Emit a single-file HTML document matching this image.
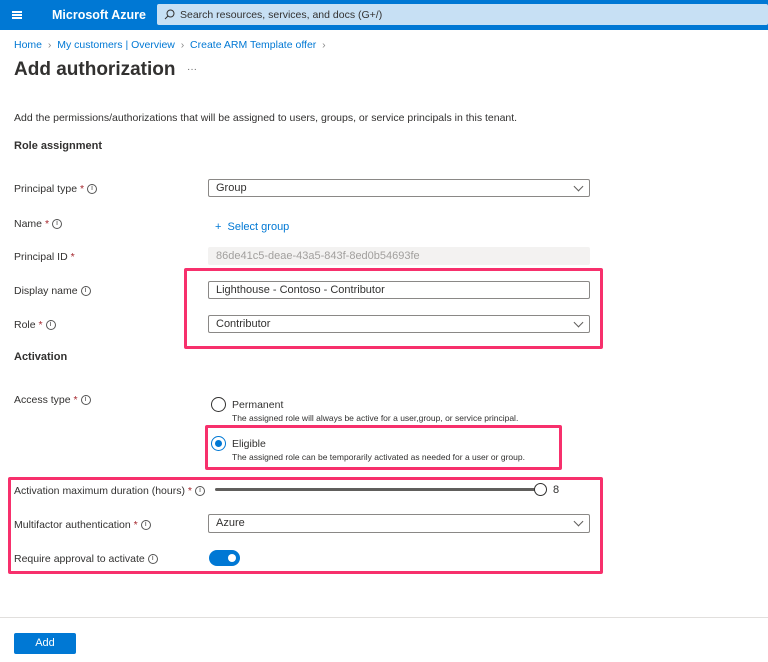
<!DOCTYPE html><html><head><style>
body{margin:0;width:768px;height:662px;background:#fff;font-family:"Liberation Sans",sans-serif;position:relative;overflow:hidden;color:#323130}
.a{position:absolute;white-space:nowrap}
.lbl{font-size:10.5px;color:#323130}
.req{color:#a4262c}
.i{display:inline-block;width:8px;height:8px;border:1px solid #555;border-radius:50%;font-size:7px;line-height:8px;text-align:center;vertical-align:middle;margin-left:3px}
.box{position:absolute;border:1px solid #8a8886;border-radius:2px;font-size:11px;box-sizing:border-box;padding-left:7px;line-height:17px}
.chev{position:absolute;right:7px;top:3px;width:6px;height:6px;border-right:1px solid #605e5c;border-bottom:1px solid #605e5c;transform:rotate(45deg)}
.pink{position:absolute;border:3px solid #f7306c;border-radius:2px;box-sizing:border-box}
</style></head><body>
<div class="a" style="left:0;top:0;width:768px;height:30px;background:#0078d4"></div>
<div class="a" style="left:12px;top:11px;width:10px;height:1.5px;background:#fff;box-shadow:0 3px 0 #fff,0 6px 0 #fff"></div>
<div class="a" style="left:52px;top:8px;color:#fff;font-size:12.5px;font-weight:bold">Microsoft Azure</div>
<div class="a" style="left:157px;top:4px;width:611px;height:21px;background:#c7e0f4;border-radius:2px"></div>
<svg class="a" style="left:164px;top:9px" width="11" height="11" viewBox="0 0 11 11"><circle cx="6.5" cy="4.5" r="3.5" fill="none" stroke="#323130" stroke-width="1"/><path d="M4 7L1 10" stroke="#323130" stroke-width="1"/></svg>
<div class="a" style="left:180px;top:9px;font-size:10.5px;color:#323130">Search resources, services, and docs (G+/)</div>
<div class="a" style="left:14px;top:39px;font-size:10.5px;color:#0078d4">Home <span style="color:#888">&nbsp;›&nbsp;</span> My customers | Overview <span style="color:#888">&nbsp;›&nbsp;</span> Create ARM Template offer <span style="color:#888">&nbsp;›</span></div>
<div class="a" style="left:14px;top:59px;font-size:19px;font-weight:bold;color:#323130">Add authorization</div>
<div class="a" style="left:187px;top:64px;font-size:10px;color:#666">···</div>
<div class="a lbl" style="left:14px;top:112px">Add the permissions/authorizations that will be assigned to users, groups, or service principals in this tenant.</div>
<div class="a" style="left:14px;top:140px;font-size:11px;font-weight:bold">Role assignment</div>
<div class="a lbl" style="left:14px;top:183px">Principal type <span class="req">*</span><span class="i">i</span></div>
<div class="box" style="left:208px;top:179px;width:382px;height:18px">Group<div class="chev"></div></div>
<div class="a lbl" style="left:14px;top:218px">Name <span class="req">*</span><span class="i">i</span></div>
<div class="a" style="left:215px;top:221px;font-size:11px;color:#0078d4">+&nbsp; Select group</div>
<div class="a lbl" style="left:14px;top:251px">Principal ID <span class="req">*</span></div>
<div class="box" style="left:208px;top:247px;width:382px;height:18px;border-color:#f3f2f1;background:#f3f2f1;color:#a19f9d">86de41c5-deae-43a5-843f-8ed0b54693fe</div>
<div class="a lbl" style="left:14px;top:285px">Display name<span class="i">i</span></div>
<div class="box" style="left:208px;top:281px;width:382px;height:18px">Lighthouse - Contoso - Contributor</div>
<div class="a lbl" style="left:14px;top:319px">Role <span class="req">*</span><span class="i">i</span></div>
<div class="box" style="left:208px;top:315px;width:382px;height:18px">Contributor<div class="chev"></div></div>
<div class="pink" style="left:184px;top:268px;width:419px;height:81px"></div>
<div class="a" style="left:14px;top:351px;font-size:11px;font-weight:bold">Activation</div>
<div class="a lbl" style="left:14px;top:394px">Access type <span class="req">*</span><span class="i">i</span></div>
<div class="a" style="left:211px;top:397px;width:13px;height:13px;border:1px solid #323130;border-radius:50%"></div>
<div class="a" style="left:232px;top:399px;font-size:10.5px">Permanent</div>
<div class="a" style="left:232px;top:413px;font-size:8.5px">The assigned role will always be active for a user,group, or service principal.</div>
<div class="a" style="left:211px;top:436px;width:13px;height:13px;border:1px solid #0078d4;border-radius:50%"></div>
<div class="a" style="left:215px;top:440px;width:7px;height:7px;background:#0078d4;border-radius:50%"></div>
<div class="a" style="left:232px;top:438px;font-size:10.5px">Eligible</div>
<div class="a" style="left:232px;top:452px;font-size:8.5px">The assigned role can be temporarily activated as needed for a user or group.</div>
<div class="pink" style="left:205px;top:425px;width:357px;height:45px"></div>
<div class="a lbl" style="left:14px;top:485px">Activation maximum duration (hours) <span class="req">*</span><span class="i">i</span></div>
<div class="a" style="left:215px;top:488px;width:322px;height:3px;background:#605e5c;border-radius:2px"></div>
<div class="a" style="left:534px;top:483px;width:11px;height:11px;border:1px solid #323130;border-radius:50%;background:#fff"></div>
<div class="a" style="left:553px;top:484px;font-size:11px">8</div>
<div class="a lbl" style="left:14px;top:519px">Multifactor authentication <span class="req">*</span><span class="i">i</span></div>
<div class="box" style="left:208px;top:514px;width:382px;height:19px">Azure<div class="chev"></div></div>
<div class="a lbl" style="left:14px;top:553px">Require approval to activate<span class="i">i</span></div>
<div class="a" style="left:209px;top:550px;width:31px;height:16px;background:#0078d4;border-radius:8px"></div>
<div class="a" style="left:228px;top:554px;width:8px;height:8px;background:#fff;border-radius:50%"></div>
<div class="pink" style="left:8px;top:477px;width:595px;height:97px"></div>
<div class="a" style="left:0;top:617px;width:768px;height:1px;background:#e1dfdd"></div>
<div class="a" style="left:14px;top:633px;width:62px;height:21px;background:#0078d4;border-radius:2px;color:#fff;font-size:11px;text-align:center;line-height:21px">Add</div>
</body></html>
